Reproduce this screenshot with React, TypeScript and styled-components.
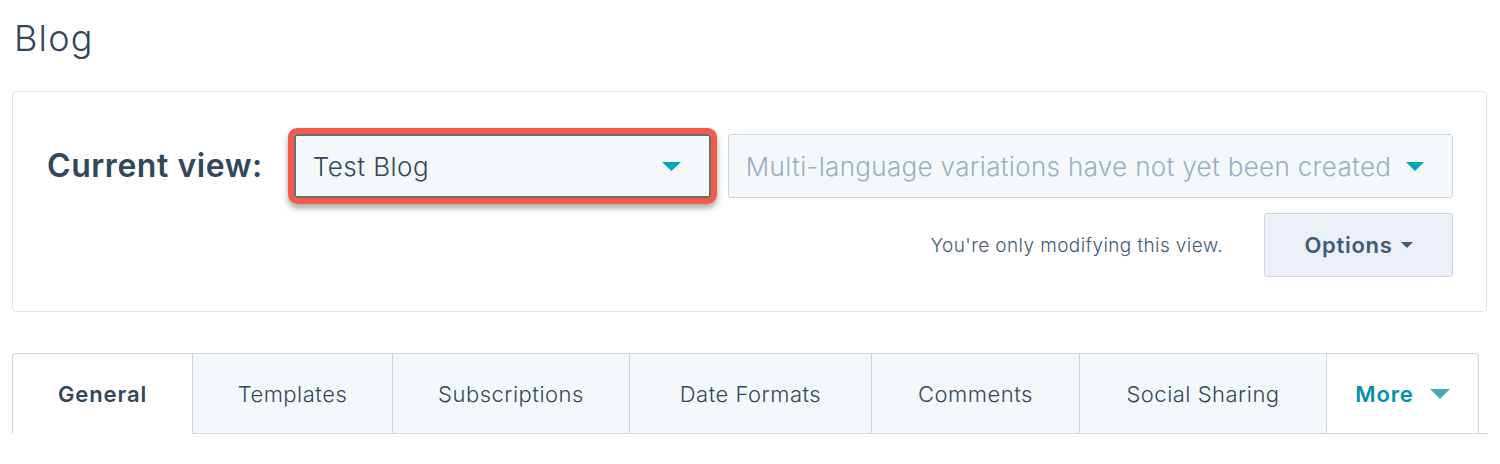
import React from "react";
import styled, { createGlobalStyle } from "styled-components";

const Global = createGlobalStyle`
  html, body { margin: 0; padding: 0; background: #ffffff; }
  body { font-family: Inter, "Noto Sans", sans-serif; color: #33475b; }
  * { box-sizing: border-box; }
`;

const Page = styled.div`
  width: 1500px;
  padding: 16px 13px 0 12px;
`;

const Title = styled.h1`
  margin: 0;
  padding-left: 2px;
  font-size: 36px;
  line-height: 44px;
  font-weight: 300;
  letter-spacing: 1.2px;
  color: #33475b;
`;

const Card = styled.section`
  margin-top: 31px;
  border: 1px solid #dfe3eb;
  border-radius: 4px;
  padding: 36px 33px 34px 34px;
  display: flex;
  align-items: flex-start;
  gap: 25px;
`;

const Label = styled.div`
  font-size: 32px;
  font-weight: 600;
  letter-spacing: 0.55px;
  line-height: 76px;
  color: #33475b;
  white-space: nowrap;
`;

const Controls = styled.div`
  flex: 1;
  display: flex;
  flex-direction: column;
`;

const TopRow = styled.div`
  display: flex;
  align-items: center;
  gap: 11px;
`;

const Highlight = styled.div`
  border: 6px solid #f25a4b;
  border-radius: 9px;
  box-shadow: 0 4px 6px rgba(0, 0, 0, 0.35);
`;

const Select = styled.div<{ $highlighted?: boolean }>`
  display: flex;
  align-items: center;
  justify-content: space-between;
  height: 64px;
  padding: 0 28px 0 17px;
  background: #f5f8fa;
  border-radius: 3px;
  ${(p) =>
    p.$highlighted
      ? `width: 417px; border: 2px solid #6a6e73;`
      : `flex: 1; border: 1px solid #cbd6e2;`}
`;

const SelectText = styled.span<{ $placeholder?: boolean }>`
  font-size: 26px;
  font-weight: 300;
  letter-spacing: ${(p) => (p.$placeholder ? 0.33 : 0.45)}px;
  color: ${(p) => (p.$placeholder ? "#99afc4" : "#33475b")};
  white-space: nowrap;
`;

const BottomRow = styled.div`
  display: flex;
  justify-content: flex-end;
  align-items: center;
  gap: 41px;
  margin-top: 9px;
`;

const Helper = styled.span`
  font-size: 19px;
  font-weight: 300;
  letter-spacing: 0.4px;
  color: #425b76;
`;

const OptionsButton = styled.button`
  width: 189px;
  height: 64px;
  display: flex;
  align-items: center;
  justify-content: center;
  gap: 8px;
  background: #eaf0f6;
  border: 1px solid #cbd6e2;
  border-radius: 3px;
  font-family: Inter, "Noto Sans", sans-serif;
  font-size: 22px;
  font-weight: 600;
  letter-spacing: 0.7px;
  color: #425b76;
  padding: 0;
`;

const TabBar = styled.nav`
  margin-top: 41px;
  display: flex;
  border-bottom: 1px solid #cbd6e2;
  margin-right: -1px;
`;

const Tab = styled.div<{ $w: number; $active?: boolean; $first?: boolean; $last?: boolean }>`
  width: ${(p) => p.$w + (p.$last ? 1 : 0)}px;
  height: ${(p) => (p.$active ? 81 : 80)}px;
  margin-bottom: ${(p) => (p.$active ? -1 : 0)}px;
  display: flex;
  align-items: center;
  justify-content: center;
  gap: 16px;
  border-top: 1px solid #cbd6e2;
  border-left: 1px solid #cbd6e2;
  border-right: ${(p) => (p.$last ? "1px solid #cbd6e2" : "none")};
  border-top-left-radius: ${(p) => (p.$first ? 4 : 0)}px;
  border-top-right-radius: ${(p) => (p.$last ? 4 : 0)}px;
  background: ${(p) => (p.$active || p.$last ? "#ffffff" : "#f5f8fa")};
  font-size: 22px;
  letter-spacing: ${(p) => (p.$active || p.$last ? 0.9 : 0.5)}px;
  font-weight: ${(p) => (p.$active || p.$last ? 600 : 300)};
  color: ${(p) => (p.$last ? "#0091ae" : "#33475b")};
  white-space: nowrap;
`;

const Caret = ({ w, h, color }: { w: number; h: number; color: string }) => (
  <svg width={w} height={h} viewBox={`0 0 ${w} ${h}`} style={{ flex: "none" }}>
    <polygon points={`0,0 ${w},0 ${w / 2},${h}`} fill={color} />
  </svg>
);

const tabs = [
  { label: "General", w: 180, active: true },
  { label: "Templates", w: 200 },
  { label: "Subscriptions", w: 237 },
  { label: "Date Formats", w: 242 },
  { label: "Comments", w: 208 },
  { label: "Social Sharing", w: 247 },
];

export default function App() {
  return (
    <>
      <Global />
      <Page>
        <Title>Blog</Title>
        <Card>
          <Label>Current view:</Label>
          <Controls>
            <TopRow>
              <Highlight>
                <Select $highlighted>
                  <SelectText>Test Blog</SelectText>
                  <Caret w={19} h={9} color="#00a4bd" />
                </Select>
              </Highlight>
              <Select>
                <SelectText $placeholder>
                  Multi-language variations have not yet been created
                </SelectText>
                <Caret w={18} h={9} color="#00a4bd" />
              </Select>
            </TopRow>
            <BottomRow>
              <Helper>You're only modifying this view.</Helper>
              <OptionsButton>
                Options
                <Caret w={12} h={6} color="#425b76" />
              </OptionsButton>
            </BottomRow>
          </Controls>
        </Card>
        <TabBar>
          {tabs.map((t, i) => (
            <Tab key={t.label} $w={t.w} $active={t.active} $first={i === 0}>
              {t.label}
            </Tab>
          ))}
          <Tab $w={152} $last>
            More
            <Caret w={20} h={10} color="#4aa8c4" />
          </Tab>
        </TabBar>
      </Page>
    </>
  );
}
